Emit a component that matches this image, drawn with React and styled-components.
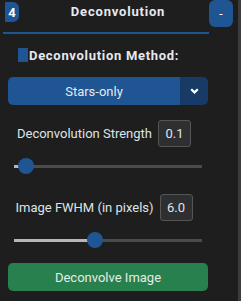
import React from 'react';
import styled, { createGlobalStyle } from 'styled-components';

const GlobalStyle = createGlobalStyle`
    html, body {
        margin: 0;
        padding: 0;
        background: #1e1e1e;
        font-family: Roboto, "Liberation Sans", sans-serif;
    }
`;

const Frame = styled.div`
    display: flex;
    width: 241px;
    height: 301px;
    overflow: hidden;
`;

const Panel = styled.div`
    width: 238px;
    display: flex;
    flex-direction: column;
    color: #dfe3e8;
`;

const Scrollbar = styled.div`
    width: 3px;
    background: #3c3c3c;
`;

const Header = styled.div`
    display: flex;
    align-items: flex-start;
`;

const TitleBox = styled.div`
    flex: 1;
    height: 32px;
    margin-left: 3px;
    padding-left: 2px;
    border-bottom: 2px solid #1f5592;
    display: flex;
    align-items: flex-start;
`;

const Badge = styled.div`
    margin-top: 2px;
    width: 14px;
    height: 20px;
    background: #1f5592;
    border-radius: 1px 6px 6px 1px;
    color: #fff;
    font-weight: 700;
    font-size: 13px;
    display: flex;
    align-items: center;
    justify-content: center;
`;

const Title = styled.div`
    flex: 1;
    padding-left: 8px;
    margin-top: 4px;
    text-align: center;
    font-weight: 700;
    font-size: 13px;
    letter-spacing: 0.8px;
    color: #e6e9ee;
`;

const Collapse = styled.button`
    width: 24px;
    height: 27px;
    margin-right: 5px;
    border: none;
    border-radius: 6px;
    background: #1f5592;
    color: #fff;
    font-size: 12px;
    font-family: inherit;
    padding: 0;
`;

const Body = styled.div`
    display: flex;
    flex-direction: column;
    padding-left: 8px;
    width: 200px;
`;

const MethodLabel = styled.div`
    margin-top: 14px;
    margin-left: 10px;
    height: 14px;
    display: flex;
    align-items: center;
    gap: 1px;
    font-weight: 700;
    font-size: 13px;
    letter-spacing: 0.7px;
    color: #e6e9ee;
`;

const Marker = styled.span`
    width: 10px;
    height: 14px;
    background: #1f5592;
`;

const Select = styled.div`
    margin-top: 15px;
    height: 28px;
    display: flex;
    border-radius: 5px;
    overflow: hidden;
`;

const SelectValue = styled.div`
    flex: 1;
    background: #1f5592;
    display: flex;
    align-items: center;
    justify-content: center;
    font-size: 13px;
    color: #e4e8ee;
`;

const SelectArrow = styled.div`
    width: 28px;
    background: #173b66;
    display: flex;
    align-items: center;
    justify-content: center;
`;

const FieldRow = styled.div`
    margin-top: ${({ gapTop }) => gapTop}px;
    height: 27px;
    display: flex;
    align-items: center;
    justify-content: center;
    gap: 6px;
    padding-right: 8px;
    font-size: 13px;
    color: #dfe3e8;
`;

const NumberBox = styled.div`
    width: 31px;
    height: 25px;
    border: 1px solid #555;
    border-radius: 3px;
    background: #2e2f30;
    display: flex;
    align-items: center;
    justify-content: center;
    font-size: 13px;
    color: #e0e3e7;
`;

const SliderWrap = styled.div`
    margin-top: 11px;
    margin-left: 6px;
    width: 188px;
    height: 16px;
    position: relative;
    display: flex;
    align-items: center;
`;

const Track = styled.div`
    width: 100%;
    height: 3px;
    background: #4a4b4d;
    position: relative;
`;

const Fill = styled.div`
    height: 100%;
    background: #b5b7ba;
`;

const Thumb = styled.div`
    position: absolute;
    top: 0;
    width: 16px;
    height: 16px;
    margin-left: -8px;
    border-radius: 50%;
    background: #1f5592;
`;

const ActionButton = styled.button`
    margin-top: 15px;
    height: 28px;
    border: none;
    border-radius: 5px;
    background: #27804e;
    color: #e6ece8;
    font-family: inherit;
    font-size: 13px;
    padding: 0;
`;

function Slider({ pos }) {
    return (
        <SliderWrap>
            <Track>
                <Fill style={{ width: pos }} />
            </Track>
            <Thumb style={{ left: pos }} />
        </SliderWrap>
    );
}

export default function App() {
    return (
        <Frame>
            <GlobalStyle />
            <Panel>
                <Header>
                    <TitleBox>
                        <Badge>4</Badge>
                        <Title>Deconvolution</Title>
                    </TitleBox>
                    <Collapse>-</Collapse>
                </Header>
                <Body>
                    <MethodLabel>
                        <Marker />
                        Deconvolution Method:
                    </MethodLabel>
                    <Select>
                        <SelectValue>Stars-only</SelectValue>
                        <SelectArrow>
                            <svg width="9" height="6" viewBox="0 0 9 6">
                                <path d="M1.2 1.2 L4.5 4.4 L7.8 1.2" fill="none" stroke="#fff" strokeWidth="2.2" />
                            </svg>
                        </SelectArrow>
                    </Select>
                    <FieldRow gapTop={15}>
                        Deconvolution Strength
                        <NumberBox>0.1</NumberBox>
                    </FieldRow>
                    <Slider pos="12px" />
                    <FieldRow gapTop={20}>
                        Image FWHM (in pixels)
                        <NumberBox>6.0</NumberBox>
                    </FieldRow>
                    <Slider pos="81px" />
                    <ActionButton>Deconvolve Image</ActionButton>
                </Body>
            </Panel>
            <Scrollbar />
        </Frame>
    );
}
